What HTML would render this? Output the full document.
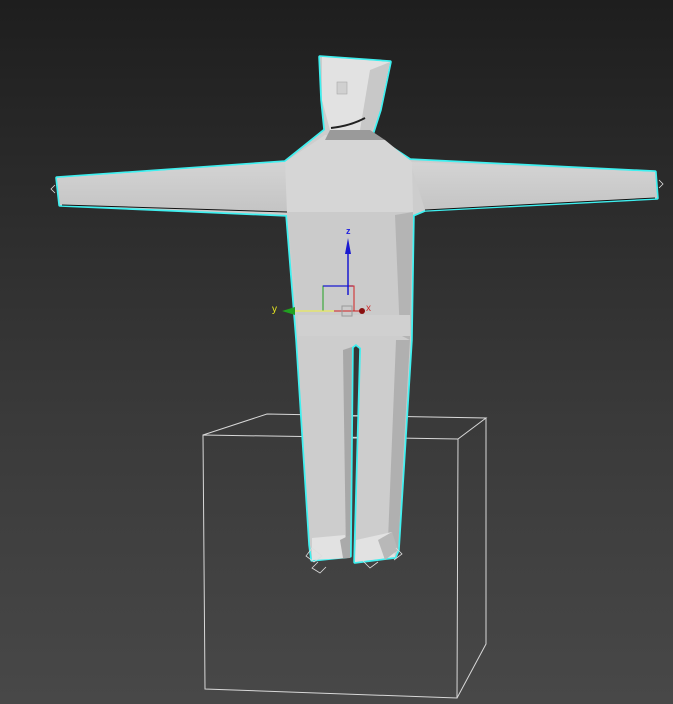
<!DOCTYPE html>
<html><head><style>
html,body{margin:0;padding:0;width:673px;height:704px;overflow:hidden}
body{background:linear-gradient(#1e1e1e 0%,#2a2a2a 25%,#3a3a3a 60%,#484848 100%)}
svg{position:absolute;left:0;top:0}
</style></head><body>
<svg width="673" height="704" viewBox="0 0 673 704" font-family="Liberation Sans, sans-serif">
<defs>
<linearGradient id="arm" x1="0" y1="0" x2="0" y2="1"><stop offset="0" stop-color="#d4d4d4"/><stop offset="1" stop-color="#c4c4c4"/></linearGradient>
</defs>
<g fill="none" stroke="#d8d8d8" stroke-width="1">
<polyline points="203,435 267,414 486,418 458,439 203,435 205,689 457,698 458,439"/>
<polyline points="486,418 486,644 457,698"/>
</g>
<line x1="345" y1="416" x2="365" y2="416" stroke="#d8d8d8"/>
<line x1="345" y1="438" x2="365" y2="438" stroke="#d8d8d8"/>
<polygon id="body" points="320,57 390,62 380,110 372,135 410,160 655,172 657,198 425,210 413,215 411,340 398,550 395,557 355,562 361,348 356,344 352,347 350,556 312,560 310,545 297,340 287,215 60,205 57,178 285,162 325,130 322,100" fill="#3ff0f0" stroke="#3ff0f0" stroke-width="3.5" stroke-linejoin="round"/>
<polygon points="320,57 390,62 380,110 372,135 410,160 655,172 657,198 425,210 413,215 411,340 398,550 395,557 355,562 361,348 356,344 352,347 350,556 312,560 310,545 297,340 287,215 60,205 57,178 285,162 325,130 322,100" fill="#cdcdcd"/>
<polygon points="57,178 285,162 287,212 60,204" fill="url(#arm)"/>
<polygon points="410,162 655,172 657,198 425,210" fill="url(#arm)"/>
<polygon points="285,162 325,135 385,140 412,162 413,212 287,212" fill="#d6d6d6"/>
<polygon points="287,212 413,212 410,315 298,315" fill="#cbcbcb"/>
<polygon points="395,215 413,212 410,340 400,335" fill="#b4b4b4"/>
<polygon points="298,315 410,315 410,336 298,336" fill="#d0d0d0"/>
<polygon points="322,57 390,62 380,110 362,130 330,130 322,100" fill="#e2e2e2"/>
<polygon points="370,70 390,62 380,110 370,135 360,130" fill="#c8c8c8"/>
<rect x="337" y="82" width="10" height="12" fill="#d0d0d0" stroke="#aaa" stroke-width="0.6"/>
<polygon points="330,130 370,130 385,140 325,140" fill="#9a9a9a"/>
<path d="M331,128 Q350,126 365,118" stroke="#222" stroke-width="2" fill="none"/>
<polygon points="343,350 352,347 350,556 346,556" fill="#a8a8a8"/>
<polygon points="396,340 410,340 398,550 388,540" fill="#b0b0b0"/>
<polygon points="312,538 345,535 350,558 312,560" fill="#e2e2e2"/>
<polygon points="356,540 392,532 395,557 355,562" fill="#e2e2e2"/>
<polygon points="340,540 350,535 350,558 343,558" fill="#aaa"/>
<polygon points="378,540 392,532 398,550 385,560" fill="#b8b8b8"/>
<line x1="62" y1="205" x2="287" y2="212" stroke="#111" stroke-width="1"/>
<line x1="425" y1="210" x2="655" y2="198" stroke="#111" stroke-width="1"/>
<g stroke="#ddd" stroke-width="0.8" fill="none">
<path d="M312,548 l-6,8 8,6 8,-6z M318,562 l-6,6 8,5 6,-6"/>
<path d="M362,560 l8,8 8,-6 M396,548 l6,6 -8,6"/>
<path d="M55,185 l-4,4 4,4 M659,180 l4,4 -4,4"/>
</g>
<line x1="348" y1="295" x2="348" y2="250" stroke="#1a1ad0" stroke-width="1.5"/>
<polygon points="348,238 345,254 351,254" fill="#1a1ad0"/>
<text x="346" y="234" font-size="9" font-weight="bold" fill="#2020e0">z</text>
<polyline points="323,311 323,286 353,286" stroke="#20a020" fill="none"/>
<line x1="323" y1="286" x2="353" y2="286" stroke="#1a1ad0" stroke-width="1.2"/>
<polyline points="349,286 354,286 354,311" stroke="#d02020" fill="none"/>
<line x1="334" y1="311" x2="362" y2="311" stroke="#d02020" stroke-width="1"/>
<line x1="295" y1="311" x2="334" y2="311" stroke="#f0f040" stroke-width="1"/>
<polygon points="282,311 295,307 295,315" fill="#20a020"/>
<rect x="342" y="306" width="10" height="10" fill="none" stroke="#999"/>
<circle cx="362" cy="311" r="3" fill="#8a1010"/>
<text x="272" y="312" font-size="10" fill="#e8e820">y</text>
<text x="366" y="311" font-size="10" fill="#d03030">x</text>
</svg>
</body></html>
